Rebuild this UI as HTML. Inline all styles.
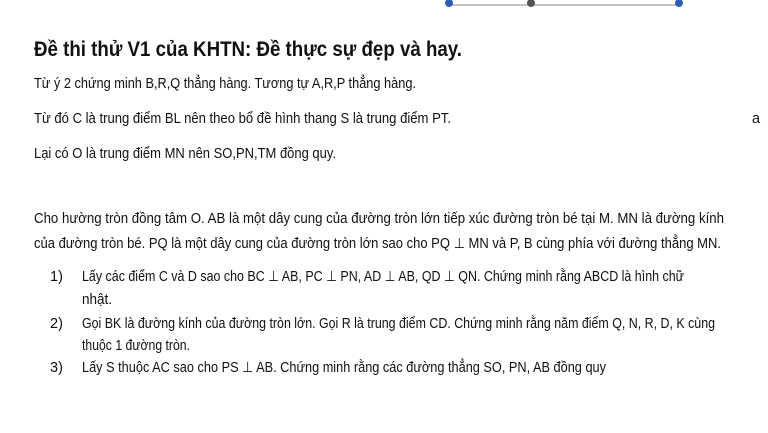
<!DOCTYPE html>
<html><head><meta charset="utf-8"><style>
html,body{margin:0;padding:0;background:#fff;width:768px;height:433px;overflow:hidden}
svg{display:block}
text{font-family:"Liberation Sans",sans-serif;fill:#111}
</style></head><body>
<svg width="768" height="433" viewBox="0 0 768 433" xmlns="http://www.w3.org/2000/svg">
<line x1="449" y1="5" x2="680" y2="5" stroke="#888" stroke-width="1"/>
<circle cx="449" cy="3" r="4" fill="#2b5fb8"/>
<circle cx="531" cy="3" r="4" fill="#555"/>
<circle cx="679" cy="3" r="4" fill="#2b5fb8"/>
<text x="34" y="56" font-size="21" font-weight="bold" textLength="428" lengthAdjust="spacingAndGlyphs">Đề thi thử V1 của KHTN: Đề thực sự đẹp và hay.</text>
<g font-size="14.5">
<text x="34" y="88" textLength="382" lengthAdjust="spacingAndGlyphs">Từ ý 2 chứng minh B,R,Q thẳng hàng. Tương tự A,R,P thẳng hàng.</text>
<text x="34" y="123" textLength="417" lengthAdjust="spacingAndGlyphs">Từ đó C là trung điểm BL nên theo bổ đề hình thang S là trung điểm PT.</text>
<text x="752" y="123">a</text>
<text x="34" y="158" textLength="302" lengthAdjust="spacingAndGlyphs">Lại có O là trung điểm MN nên SO,PN,TM đồng quy.</text>
<text x="34" y="223" textLength="690" lengthAdjust="spacingAndGlyphs">Cho hường tròn đồng tâm O. AB là một dây cung của đường tròn lớn tiếp xúc đường tròn bé tại M. MN là đường kính</text>
<text x="34" y="248" textLength="687" lengthAdjust="spacingAndGlyphs">của đường tròn bé. PQ là một dây cung của đường tròn lớn sao cho PQ ⊥ MN và P, B cùng phía với đường thẳng MN.</text>
<text x="50" y="281">1)</text>
<text x="82" y="281" textLength="602" lengthAdjust="spacingAndGlyphs">Lấy các điểm C và D sao cho BC  ⊥ AB, PC  ⊥ PN, AD  ⊥ AB, QD  ⊥ QN. Chứng minh rằng ABCD là hình chữ</text>
<text x="82" y="304" textLength="30" lengthAdjust="spacingAndGlyphs">nhật.</text>
<text x="50" y="328">2)</text>
<text x="82" y="328" textLength="633" lengthAdjust="spacingAndGlyphs">Gọi BK là đường kính của đường tròn lớn. Gọi R là trung điểm CD. Chứng minh rằng năm điểm Q, N, R, D, K cùng</text>
<text x="82" y="350" textLength="108" lengthAdjust="spacingAndGlyphs">thuộc 1 đường tròn.</text>
<text x="50" y="372">3)</text>
<text x="82" y="372" textLength="524" lengthAdjust="spacingAndGlyphs">Lấy S thuộc AC sao cho PS ⊥ AB. Chứng minh rằng các đường thẳng SO, PN, AB đồng quy</text>
</g>
</svg>
</body></html>
